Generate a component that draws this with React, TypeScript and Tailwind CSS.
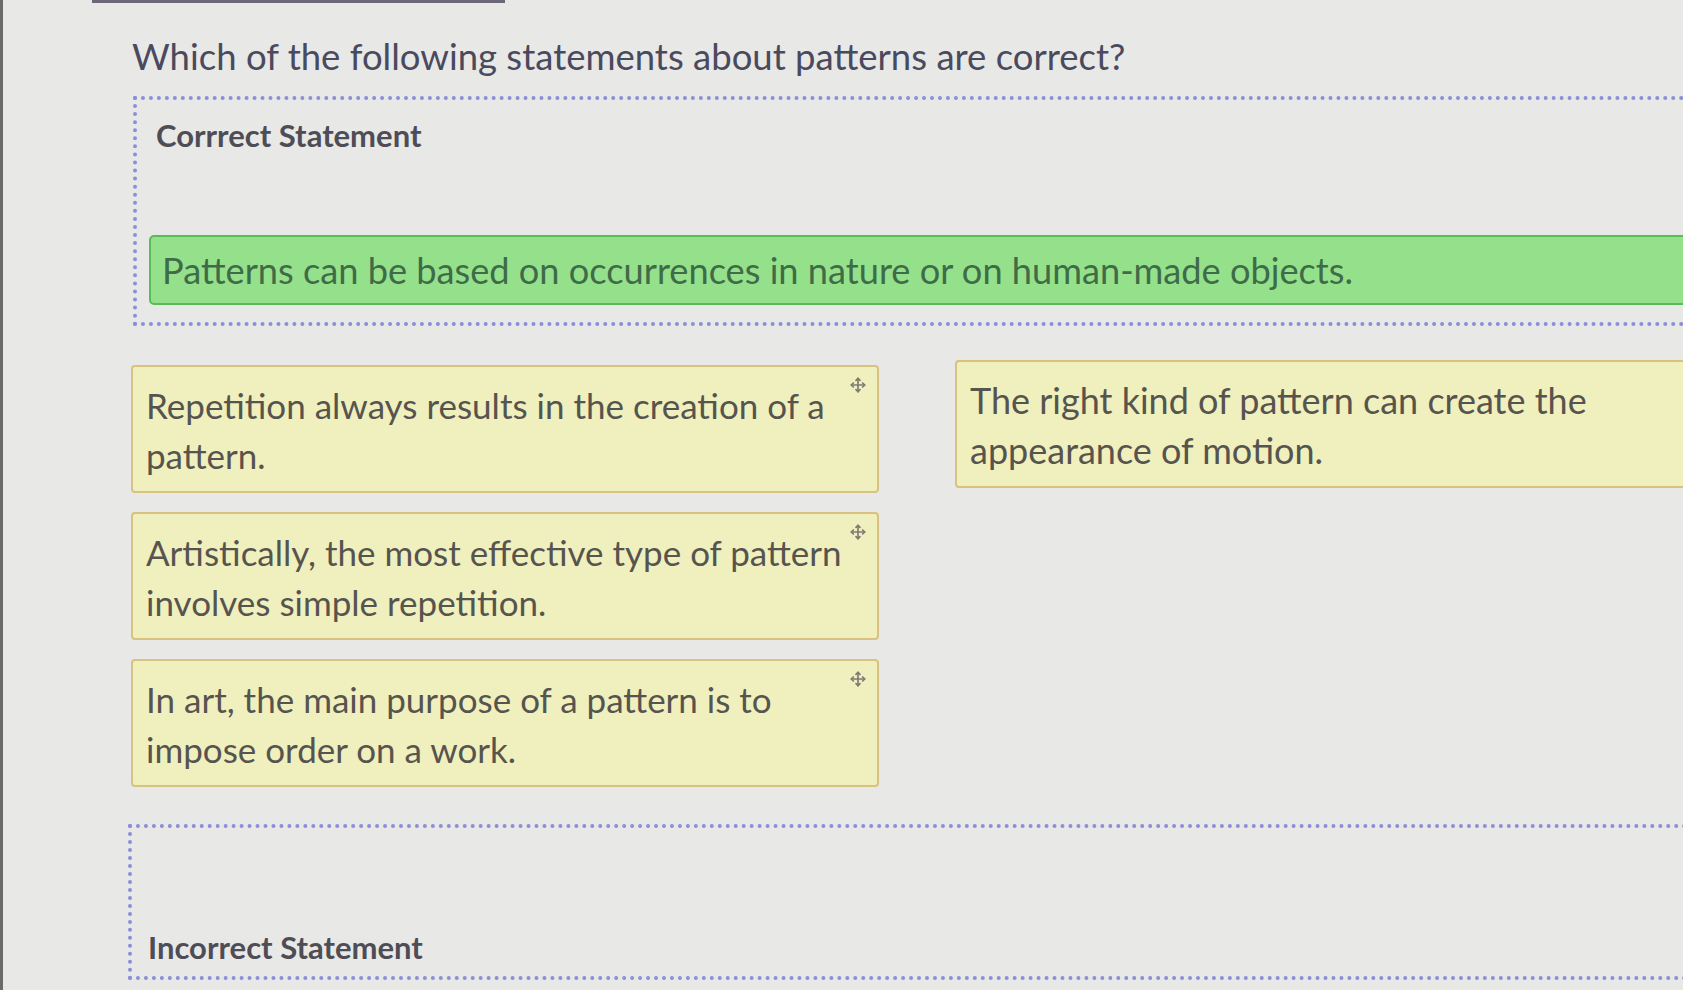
import { Fragment } from 'react';
import { Move } from 'lucide-react';

const FONT = { fontFamily: 'Lato, "Open Sans", sans-serif' };

const cards = [
  'Repetition always results in the creation of a pattern.',
  'Artistically, the most effective type of pattern involves simple repetition.',
  'In art, the main purpose of a pattern is to impose order on a work.',
];

export default function App() {
  return (
    <div className="flex h-[990px] w-full overflow-hidden bg-[#e8e8e6]" style={FONT}>
      <div className="w-[3px] shrink-0 bg-[#6b6b6b]" />
      <div className="flex-1 min-w-0">
        <div className="ml-[89px] h-[3px] w-[413px] bg-[#6d6679]" />

        <h1 className="mt-[32px] ml-[129px] text-[36.5px] leading-[42px] text-[#4a4a5e] whitespace-nowrap">
          Which of the following statements about patterns are correct?
        </h1>

        {/* correct drop zone */}
        <div className="mt-[19px] ml-[130px] w-[1600px] border-4 border-dotted border-[#8a8edb] pl-[12px] pt-[19px] pb-[17px]">
          <div className="pl-[7px] text-[31px] leading-[32px] font-bold text-[#4e4d55]">Corrrect Statement</div>
          <div className="mt-[84px] flex h-[70px] items-center rounded-[5px] border-2 border-[#58bc57] bg-[#95e18b] px-[11px]">
            <span className="text-[36.2px] text-[#3f6b49] whitespace-nowrap">
              Patterns can be based on occurrences in nature or on human-made objects.
            </span>
          </div>
        </div>

        {/* unsorted items */}
        <div className="mt-[39px] ml-[128px] grid grid-cols-[748px_1fr] gap-x-[76px] gap-y-[19px]">
          {cards.map((text, i) => (
            <Fragment key={text}>
              <div className="flex h-[128px] items-start rounded-[4px] border-2 border-[#d9c27f] bg-[#eff0bd] pl-[13px] pr-[11px] pt-[13px]">
                <p className="flex-1 text-[35px] leading-[50px] text-[#57544f]">{text}</p>
                <Move size={16} strokeWidth={2.5} className="mt-[-3px] text-[#7c7b72]" />
              </div>
              {i === 0 ? (
                <div className="-mt-[5px] h-[128px] w-[900px] rounded-[4px] border-2 border-[#d9c27f] bg-[#eff0bd] pl-[13px] pt-[13px]">
                  <p className="w-[680px] text-[36px] leading-[50px] text-[#57544f]">
                    The right kind of pattern can create the appearance of motion.
                  </p>
                </div>
              ) : (
                <div />
              )}
            </Fragment>
          ))}
        </div>

        {/* incorrect drop zone */}
        <div className="mt-[37px] ml-[125px] flex h-[156px] w-[1600px] items-end border-4 border-dotted border-[#8a8edb] pb-[13px] pl-[16px]">
          <div className="text-[31px] leading-[32px] font-bold text-[#4e4d55]">Incorrect Statement</div>
        </div>
      </div>
    </div>
  );
}
